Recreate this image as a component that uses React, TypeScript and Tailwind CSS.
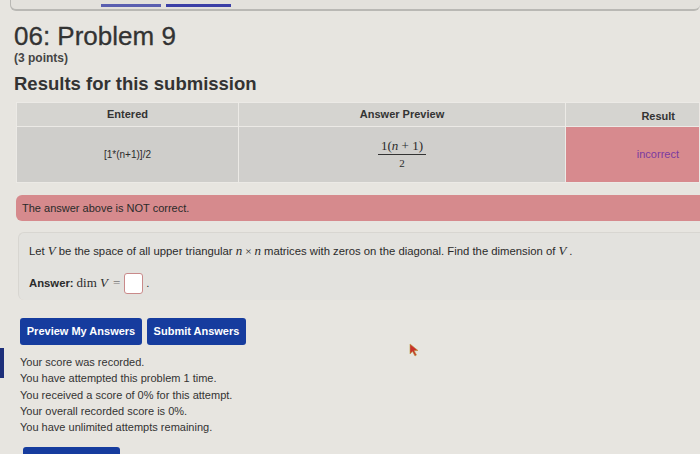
import React from 'react';

const sans = { fontFamily: '"Liberation Sans", Arial, sans-serif' };

function M({ children }: { children: React.ReactNode }) {
  return <i className="font-['Liberation_Serif',serif] text-[13px]">{children}</i>;
}

export default function App() {
  return (
    <div className="relative h-[454px] w-[700px] overflow-hidden bg-[#e7e5e0] text-[#2b2b2b] font-['Liberation_Sans',Arial,sans-serif]">
      {/* top nav box edge */}
      <div className="ml-[10px] flex h-[11px] items-end gap-[5px] rounded-b-md border-b-2 border-l border-[#b9b8b4] bg-[#e3e1dc] pl-[90px]">
        <div className="mb-[2px] h-[3px] w-[60px] bg-[#5a5fb0]" />
        <div className="mb-[2px] h-[3px] w-[65px] bg-[#3b3fa6]" />
      </div>

      <div className="pl-[14px] pr-0">
        <h1 className="mt-[10px] text-[26px] leading-[30px] text-[#333] [-webkit-text-stroke:0.3px_#333]">06: Problem 9</h1>
        <div className="mt-[0px] text-[12px] font-bold leading-[14px] text-[#444]">(3 points)</div>
        <h2 className="mt-[8px] text-[18.5px] font-bold leading-[22px] text-[#333]">Results for this submission</h2>

        <table className="ml-[2px] mt-[7px] w-[684px] border-collapse text-[11px]">
          <thead>
            <tr className="h-[24px] bg-[#d5d4d0] font-bold text-[#333]">
              <th className="w-[222px] border border-[#eceae6] text-center">Entered</th>
              <th className="w-[327px] border border-[#eceae6] text-center">Answer Preview</th>
              <th className="border border-[#eceae6] pr-[24px] pt-[4px] text-right">Result</th>
            </tr>
          </thead>
          <tbody>
            <tr className="h-[56px]">
              <td className="border border-[#eceae6] bg-[#cfcecb] text-center text-[10px]">[1*(n+1)]/2</td>
              <td className="border border-[#eceae6] bg-[#d0cfcc]">
                <div className="ml-[139px] inline-flex flex-col items-center font-['Liberation_Serif',serif] text-[13px] leading-[16px]">
                  <span>1(<i>n</i> + 1)</span>
                  <span className="h-px w-[48px] bg-[#333]" />
                  <span className="text-[11px]">2</span>
                </div>
              </td>
              <td className="border border-[#eceae6] bg-[#d78a8e] pr-[20px] text-right text-[11px] text-[#7a3aa0]">incorrect</td>
            </tr>
          </tbody>
        </table>

        <div className="ml-[2px] mt-[12px] flex h-[26px] items-center rounded-l-md bg-[#d68a8d] pl-[6px] text-[11px] text-[#2a2a2a]">
          The answer above is NOT correct.
        </div>

        <div className="ml-[4px] mt-[11px] h-[68px] rounded-l-md border-t border-l border-[#d8d6d1] bg-[#e3e2de] pl-[10px] pt-[8px] text-[11.3px]">
          <div className="flex items-baseline gap-[3px]">
            Let <M>V</M> be the space of all upper triangular <M>n</M> <span className="font-['Liberation_Serif',serif]">×</span> <M>n</M> matrices with zeros on the diagonal. Find the dimension of <M>V</M>.
          </div>
          <div className="mt-[12px] flex items-center gap-[3px]">
            <b>Answer:</b>
            <span className="font-['Liberation_Serif',serif] text-[13px]">dim <i>V</i></span>
            <span className="ml-[2px] font-['Liberation_Serif',serif] text-[13px] text-[#777]">=</span>
            <span className="ml-[1px] h-[21px] w-[19px] rounded-[3px] border border-[#c98a8a] bg-white" />
            <span>.</span>
          </div>
        </div>

        <div className="ml-[6px] mt-[18px] flex gap-[5px] text-[11px] font-bold text-white">
          <div className="flex h-[27px] w-[122px] items-center justify-center rounded-[3px] bg-[#163c9e]">Preview My Answers</div>
          <div className="flex h-[27px] w-[99px] items-center justify-center rounded-[3px] bg-[#163c9e]">Submit Answers</div>
        </div>

        <div className="ml-[6px] mt-[9px] text-[11px] leading-[16.3px] text-[#333]" style={sans}>
          <div>Your score was recorded.</div>
          <div>You have attempted this problem 1 time.</div>
          <div>You received a score of 0% for this attempt.</div>
          <div>Your overall recorded score is 0%.</div>
          <div>You have unlimited attempts remaining.</div>
        </div>

        <div className="ml-[9px] mt-[12px] h-[12px] w-[97px] rounded-t-[3px] bg-[#163c9e]" />
      </div>

      {/* left blue bar */}
      <div className="absolute left-0 top-[348px] h-[30px] w-[4px] bg-[#1d2f7a]" />

      {/* mouse pointer */}
      <svg className="absolute left-[409px] top-[343px]" width="10" height="14" viewBox="0 0 10 14">
        <path d="M1 1 L1 11 L3.5 8.5 L6 13 L7.5 12 L5.2 7.8 L9 7.5 Z" fill="#c9302c" stroke="#b8a040" strokeWidth="0.6" />
      </svg>
    </div>
  );
}
